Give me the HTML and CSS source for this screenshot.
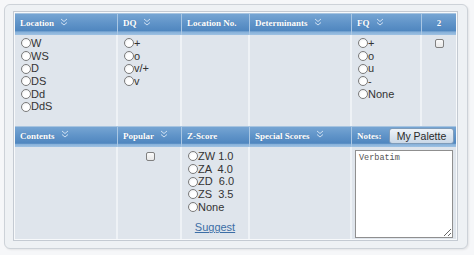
FILE: index.html
```html
<!DOCTYPE html>
<html>
<head>
<meta charset="utf-8">
<link rel="stylesheet" href="styles.css">
</head>
<body>
<div class="panel">
  <div class="frame">
    <div class="grid">
      <div class="hd">Location <svg class="chev" viewBox="0 0 8 8"><path d="M1 1l3 2.5L7 1M1 4.5l3 2.5L7 4.5"/></svg></div>
      <div class="hd">DQ <svg class="chev" viewBox="0 0 8 8"><path d="M1 1l3 2.5L7 1M1 4.5l3 2.5L7 4.5"/></svg></div>
      <div class="hd">Location No.</div>
      <div class="hd">Determinants <svg class="chev" viewBox="0 0 8 8"><path d="M1 1l3 2.5L7 1M1 4.5l3 2.5L7 4.5"/></svg></div>
      <div class="hd">FQ <svg class="chev" viewBox="0 0 8 8"><path d="M1 1l3 2.5L7 1M1 4.5l3 2.5L7 4.5"/></svg></div>
      <div class="hd center last">2</div>

      <div class="bd">
        <label class="opt"><input type="radio" name="loc">W</label>
        <label class="opt"><input type="radio" name="loc">WS</label>
        <label class="opt"><input type="radio" name="loc">D</label>
        <label class="opt"><input type="radio" name="loc">DS</label>
        <label class="opt"><input type="radio" name="loc">Dd</label>
        <label class="opt"><input type="radio" name="loc">DdS</label>
      </div>
      <div class="bd">
        <label class="opt"><input type="radio" name="dq">+</label>
        <label class="opt"><input type="radio" name="dq">o</label>
        <label class="opt"><input type="radio" name="dq">v/+</label>
        <label class="opt"><input type="radio" name="dq">v</label>
      </div>
      <div class="bd"></div>
      <div class="bd"></div>
      <div class="bd">
        <label class="opt"><input type="radio" name="fq">+</label>
        <label class="opt"><input type="radio" name="fq">o</label>
        <label class="opt"><input type="radio" name="fq">u</label>
        <label class="opt"><input type="radio" name="fq">-</label>
        <label class="opt"><input type="radio" name="fq">None</label>
      </div>
      <div class="bd center last"><input type="checkbox" class="cb cb-top"></div>

      <div class="hd">Contents <svg class="chev" viewBox="0 0 8 8"><path d="M1 1l3 2.5L7 1M1 4.5l3 2.5L7 4.5"/></svg></div>
      <div class="hd">Popular <svg class="chev" viewBox="0 0 8 8"><path d="M1 1l3 2.5L7 1M1 4.5l3 2.5L7 4.5"/></svg></div>
      <div class="hd">Z-Score</div>
      <div class="hd">Special Scores <svg class="chev" viewBox="0 0 8 8"><path d="M1 1l3 2.5L7 1M1 4.5l3 2.5L7 4.5"/></svg></div>
      <div class="hd notes-hd last">Notes: <button class="palette">My Palette</button></div>

      <div class="bd"></div>
      <div class="bd center"><input type="checkbox" class="cb cb-pop"></div>
      <div class="bd zs">
        <label class="opt"><input type="radio" name="z"><span class="pre">ZW 1.0</span></label>
        <label class="opt"><input type="radio" name="z"><span class="pre">ZA  4.0</span></label>
        <label class="opt"><input type="radio" name="z"><span class="pre">ZD  6.0</span></label>
        <label class="opt"><input type="radio" name="z"><span class="pre">ZS  3.5</span></label>
        <label class="opt"><input type="radio" name="z">None</label>
        <a class="suggest" href="#">Suggest</a>
      </div>
      <div class="bd"></div>
      <div class="bd notes last"><textarea class="ta">Verbatim</textarea></div>
    </div>
  </div>
</div>
</body>
</html>
```

FILE: styles.css
```css
html, body {
  margin: 0;
  padding: 0;
  background: #f6f7f9;
}

.panel {
  margin: 4px;
  width: 462px;
  height: 243px;
  box-sizing: content-box;
  border: 1px solid #cdd2d8;
  border-radius: 6px;
  background: #eef1f4;
  box-shadow: 1px 1px 2px rgba(0,0,0,0.08);
}

.frame {
  margin: 6px 0 0 8px;
  width: 441px;
  padding: 1px;
  border: 1px solid #c4cad2;
  background: #f7f9fb;
}

.grid {
  display: grid;
  grid-template-columns: 103px 64px 68px 102px 70px 34px;
  grid-template-rows: 22px 91px 21px 92px;
  background: #dfe5ec;
}

.hd {
  box-sizing: border-box;
  display: flex;
  align-items: center;
  padding: 0 0 3px 5px;
  font-family: "Liberation Serif", "Times New Roman", serif;
  font-weight: bold;
  font-size: 9px;
  color: #ffffff;
  white-space: pre;
  border-right: 1px solid #a9c7e4;
  border-top: 1px solid #a7c4e0;
  background: linear-gradient(to bottom, #76a5d3 0%, #5f93c8 45%, #4f86bf 82%, #83aed8 84%, #9fc2e3 100%);
  text-shadow: 0 0 1px rgba(40,70,110,0.4);
}

.hd.center {
  justify-content: center;
  padding-left: 0;
}

.hd.last, .bd.last {
  border-right: none;
}

.chev {
  width: 8px;
  height: 8px;
  margin-left: 4px;
  margin-top: -3px;
  fill: none;
  stroke: #cfe0f2;
  stroke-width: 1;
}

.notes-hd {
  grid-column: 5 / span 2;
  padding-right: 1px;
  justify-content: space-between;
}

.palette {
  width: 65px;
  height: 16px;
  margin: 0 1px 0 0;
  padding: 0;
  border: 1px solid #7f9cba;
  border-radius: 3px;
  background: linear-gradient(to bottom, #eef3f8, #cad8e7);
  font-family: "Liberation Sans", Arial, sans-serif;
  font-size: 10.5px;
  color: #2a2a2a;
  text-shadow: none;
}

.bd {
  box-sizing: border-box;
  padding: 2px 0 0 6px;
  border-right: 2px solid #eef2f6;
  font-family: "Liberation Sans", Arial, sans-serif;
  font-size: 11px;
  color: #333;
  display: flex;
  flex-direction: column;
  align-items: flex-start;
}

.bd.center {
  align-items: center;
  padding-left: 0;
}

.bd.zs {
  padding-top: 3px;
}

.bd.notes {
  grid-column: 5 / span 2;
  padding: 3px 2px 1px 3px;
}

.opt {
  display: flex;
  align-items: center;
  height: 12.7px;
  line-height: 12.7px;
}

.pre {
  white-space: pre;
}

.opt input[type="radio"] {
  appearance: none;
  -webkit-appearance: none;
  width: 10px;
  height: 10px;
  margin: 0 0 0 0;
  border: 1px solid #7b7b7b;
  border-radius: 50%;
  background: radial-gradient(circle at 60% 65%, #ffffff 40%, #e6e8ea 100%);
  box-sizing: border-box;
}

.cb {
  appearance: none;
  -webkit-appearance: none;
  width: 9px;
  height: 9px;
  margin: 0;
  border: 1px solid #808080;
  border-radius: 2px;
  background: linear-gradient(#fafafa, #e8e8e8);
  box-sizing: border-box;
}

.cb-top {
  margin-top: 2px;
}

.cb-pop {
  margin-top: 3px;
  margin-left: 2px;
}

.suggest {
  align-self: center;
  margin-top: 8px;
  margin-left: -6px;
  color: #3c6ea6;
  text-decoration: underline;
  font-size: 11px;
}

.ta {
  width: 98px;
  height: 88px;
  margin: 0;
  box-sizing: border-box;
  border: 1px solid #8f8f8f;
  background: #ffffff;
  padding: 2px 3px;
  font-family: "Liberation Mono", "DejaVu Sans Mono", monospace;
  font-size: 8.5px;
  color: #555;
  resize: both;
}
```
